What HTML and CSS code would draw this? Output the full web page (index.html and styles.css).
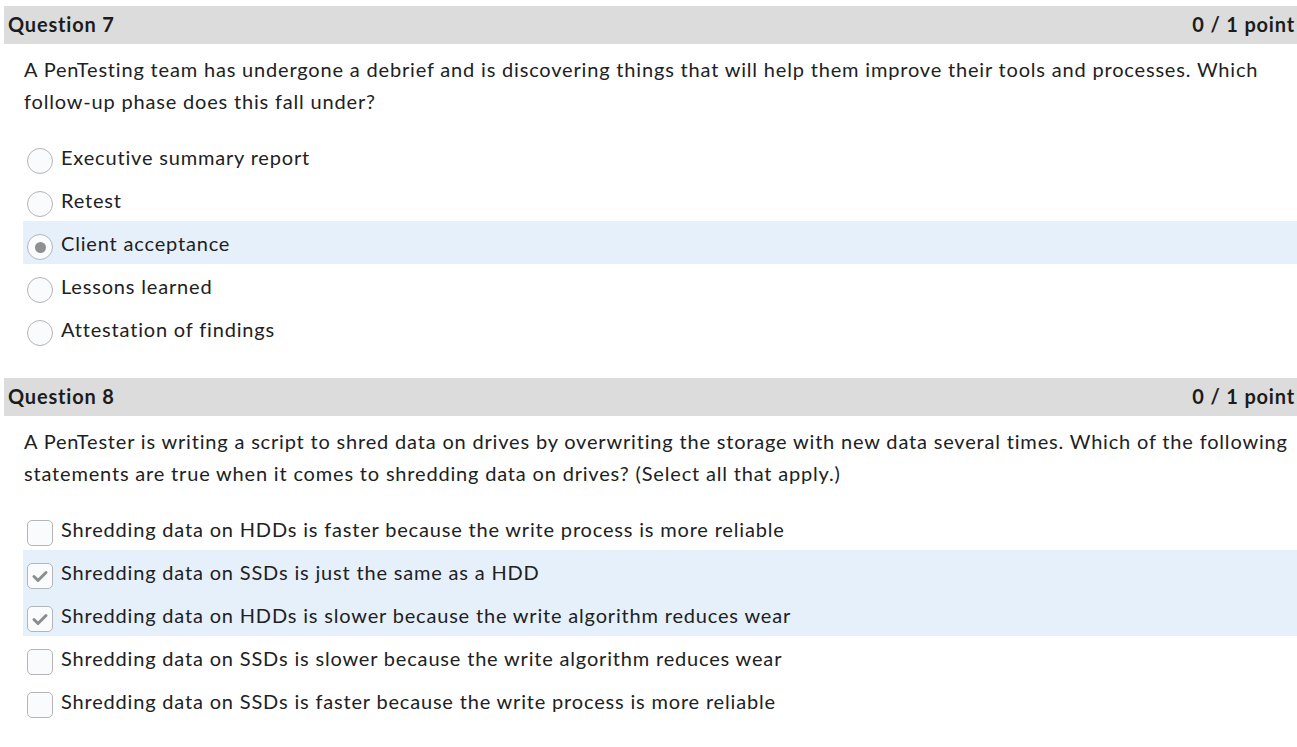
FILE: index.html
```html
<!DOCTYPE html>
<html>
<head>
<meta charset="utf-8">
<link rel="stylesheet" href="styles.css">
</head>
<body>
<div class="page">
  <section class="question">
    <div class="q-header"><span class="q-title">Question 7</span><span class="q-score">0 / 1 point</span></div>
    <p class="q-text">A PenTesting team has undergone a debrief and is discovering things that will help them improve their tools and processes. Which follow-up phase does this fall under?</p>
    <ul class="options">
      <li class="option"><span class="radio"></span><span class="label">Executive summary report</span></li>
      <li class="option"><span class="radio"></span><span class="label">Retest</span></li>
      <li class="option selected"><span class="radio checked"></span><span class="label">Client acceptance</span></li>
      <li class="option"><span class="radio"></span><span class="label">Lessons learned</span></li>
      <li class="option"><span class="radio"></span><span class="label">Attestation of findings</span></li>
    </ul>
  </section>
  <section class="question">
    <div class="q-header"><span class="q-title">Question 8</span><span class="q-score">0 / 1 point</span></div>
    <p class="q-text">A PenTester is writing a script to shred data on drives by overwriting the storage with new data several times. Which of the following statements are true when it comes to shredding data on drives? (Select all that apply.)</p>
    <ul class="options">
      <li class="option"><span class="checkbox"></span><span class="label">Shredding data on HDDs is faster because the write process is more reliable</span></li>
      <li class="option selected"><span class="checkbox"><svg viewBox="0 0 26 26" width="26" height="26"><path d="M7 13.5 L11 17.5 L19 9.5" fill="none" stroke="#8b8d90" stroke-width="3" stroke-linecap="round" stroke-linejoin="round"/></svg></span><span class="label">Shredding data on SSDs is just the same as a HDD</span></li>
      <li class="option selected"><span class="checkbox"><svg viewBox="0 0 26 26" width="26" height="26"><path d="M7 13.5 L11 17.5 L19 9.5" fill="none" stroke="#8b8d90" stroke-width="3" stroke-linecap="round" stroke-linejoin="round"/></svg></span><span class="label">Shredding data on HDDs is slower because the write algorithm reduces wear</span></li>
      <li class="option"><span class="checkbox"></span><span class="label">Shredding data on SSDs is slower because the write algorithm reduces wear</span></li>
      <li class="option"><span class="checkbox"></span><span class="label">Shredding data on SSDs is faster because the write process is more reliable</span></li>
    </ul>
  </section>
</div>
</body>
</html>
```
FILE: styles.css
```css
html, body {
  margin: 0;
  padding: 0;
  background: #ffffff;
}
.page {
  padding: 6px 0 0 4px;
  font-family: Lato, "Open Sans", sans-serif;
  color: #202122;
  letter-spacing: 0.82px;
  font-variant-ligatures: none;
}
.question {
  margin-bottom: 28px;
}
.q-header {
  height: 38px;
  background: #dcdcdc;
  display: flex;
  align-items: center;
  justify-content: space-between;
  padding: 0 2px 0 4px;
  font-weight: 700;
  font-size: 20px;
  color: #1b1c1d;
}
.q-header span {
  margin-bottom: 2px;
}
.q-text {
  margin: 9px 0 0 0;
  padding: 0 8px 0 20px;
  font-size: 20px;
  line-height: 32px;
}
.options {
  list-style: none;
  margin: 18px 0 0 19px;
  padding: 0;
}
.option {
  height: 43px;
  display: flex;
  align-items: center;
  padding-left: 4px;
  font-size: 20px;
}
.option.selected {
  background: #e6f0fb;
}
.label {
  margin-left: 8px;
}
.radio, .checkbox {
  box-sizing: border-box;
  width: 26px;
  height: 26px;
  flex: 0 0 26px;
  margin-top: 9px;
  border: 1px solid #b3b5b8;
  background: #fafbfd;
  display: flex;
  align-items: center;
  justify-content: center;
}
.radio {
  border-radius: 50%;
}
.radio.checked::after {
  content: "";
  width: 11px;
  height: 11px;
  border-radius: 50%;
  background: #8e9094;
}
.checkbox {
  border-radius: 5px;
}
.checkbox svg {
  display: block;
  flex: 0 0 26px;
}
```
